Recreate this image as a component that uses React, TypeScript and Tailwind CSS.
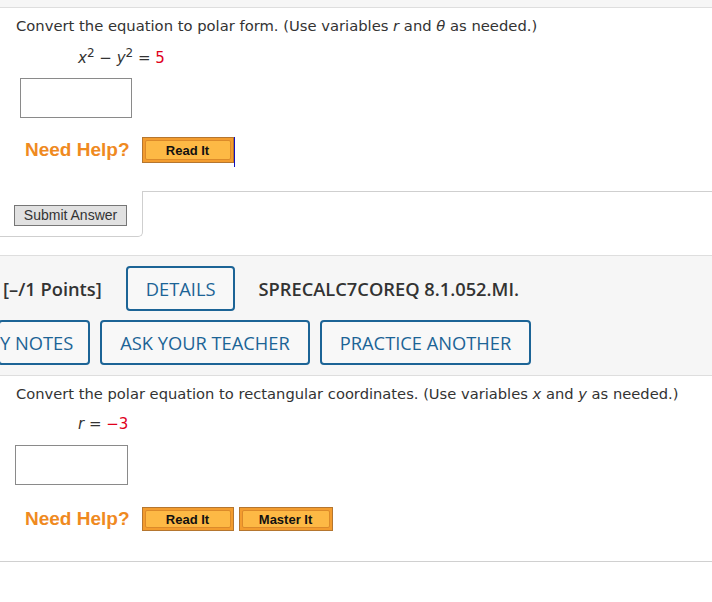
import React from "react";

const verdana = { fontFamily: '"DejaVu Sans", Verdana, sans-serif' };

function OrangeBtn({ label, w }: { label: string; w: string }) {
  return (
    <div className={`${w} border border-[#b5762f] bg-[#f39c2e] p-[2px] flex`}>
      <div className="flex-1 bg-[#fdb945] border border-[#dc8a2a] rounded-[2px] flex items-center justify-center text-[13px] font-bold text-[#111] font-['Liberation_Sans',Arial,sans-serif] leading-none">
        {label}
      </div>
    </div>
  );
}

function BlueBtn({ children, cls }: { children: React.ReactNode; cls?: string }) {
  return (
    <div
      className={`h-[45px] border-2 border-[#1c6496] rounded-[4px] flex items-center text-[18.3px] text-[#1c6496] font-['Open_Sans',sans-serif] bg-[#f8f8f8] whitespace-nowrap ${cls ?? "px-[18px]"}`}
    >
      {children}
    </div>
  );
}

export default function App() {
  return (
    <div className="w-[712px] h-[602px] bg-white overflow-hidden text-[#333]">
      <div className="h-[8px] bg-[#f6f6f6] border-b border-[#dedede]" />

      {/* Question 1 */}
      <div className="pt-[8px] pl-[16px] text-[14.75px] leading-[20px]" style={verdana}>
        Convert the equation to polar form. (Use variables <i>r</i> and <i>θ</i> as needed.)
      </div>
      <div className="mt-[12px] pl-[78px] text-[15px] leading-[20px]" style={verdana}>
        <i>x</i>
        <sup className="text-[12px]">2</sup> − <i>y</i>
        <sup className="text-[12px]">2</sup> = <span className="text-[#e0001b]">5</span>
      </div>
      <div className="mt-[10px] ml-[20px] w-[112px] h-[40px] border border-[#8a8a8a]" />
      <div className="mt-[19px] flex items-center h-[26px]">
        <span className="ml-[25px] text-[19px] font-bold text-[#ef8a1f] font-['Liberation_Sans',Arial,sans-serif]">
          Need Help?
        </span>
        <div className="ml-[12px] flex items-start h-[30px] pt-[2px]">
          <OrangeBtn label="Read It" w="w-[92px] h-[26px]" />
          <div className="w-[1px] h-[30px] bg-[#1010c0]" />
        </div>
      </div>

      {/* Submit tab */}
      <div className="mt-[28px] flex">
        <div className="w-[143px] h-[46px] border-r border-b border-[#cfcfcf] rounded-br-[5px] pt-[14px] pl-[14px]">
          <div className="w-[113px] h-[21px] bg-[#e1e1e1] border border-[#767676] flex items-center justify-center text-[14px] text-[#333] font-['Liberation_Sans',Arial,sans-serif]">
            Submit Answer
          </div>
        </div>
        <div className="flex-1 border-t border-[#cfcfcf]" />
      </div>

      {/* Gray header band */}
      <div className="mt-[18px] bg-[#f6f6f6] border-t border-b border-[#dedede] pt-[10px] pb-[10px]">
        <div className="flex items-center">
          <span className="ml-[3px] text-[18.3px] font-semibold text-[#333] font-['Open_Sans',sans-serif]">
            [–/1 Points]
          </span>
          <BlueBtn cls="ml-[24px] px-[18px]">DETAILS</BlueBtn>
          <span className="ml-[23px] text-[18.3px] font-semibold text-[#333] font-['Open_Sans',sans-serif]">
            SPRECALC7COREQ 8.1.052.MI.
          </span>
        </div>
        <div className="mt-[9px] flex items-center gap-[10px]">
          <BlueBtn cls="ml-[-2px] pl-0 pr-[15px]">Y NOTES</BlueBtn>
          <BlueBtn>ASK YOUR TEACHER</BlueBtn>
          <BlueBtn>PRACTICE ANOTHER</BlueBtn>
        </div>
      </div>

      {/* Question 2 */}
      <div className="pt-[8px] pl-[16px] text-[14.7px] leading-[20px]" style={verdana}>
        Convert the polar equation to rectangular coordinates. (Use variables <i>x</i> and <i>y</i> as needed.)
      </div>
      <div className="mt-[10px] pl-[78px] text-[15px] leading-[20px]" style={verdana}>
        <i>r</i> = <span className="text-[#e0001b]">−3</span>
      </div>
      <div className="mt-[11px] ml-[15px] w-[113px] h-[40px] border border-[#8a8a8a]" />
      <div className="mt-[22px] flex items-center h-[24px]">
        <span className="ml-[25px] text-[19px] font-bold text-[#ef8a1f] font-['Liberation_Sans',Arial,sans-serif]">
          Need Help?
        </span>
        <div className="ml-[12px] flex gap-[5px] h-[24px]">
          <OrangeBtn label="Read It" w="w-[92px]" />
          <OrangeBtn label="Master It" w="w-[94px]" />
        </div>
      </div>
      <div className="mt-[30px] border-t border-[#d0d0d0]" />
    </div>
  );
}
